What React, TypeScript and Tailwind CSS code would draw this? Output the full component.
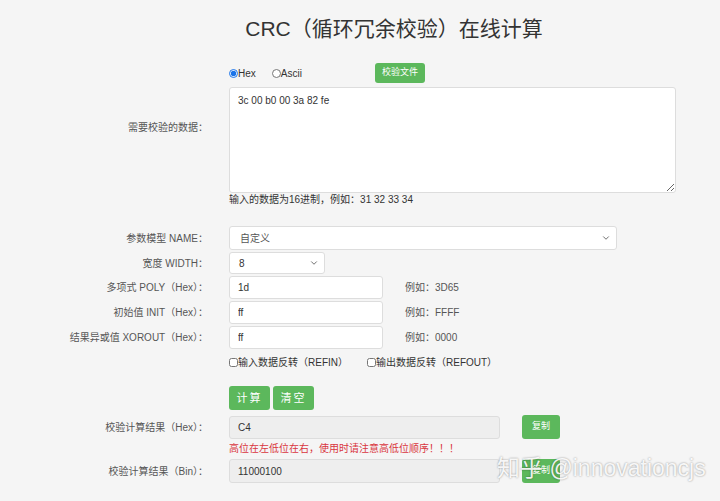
import { ChevronDown } from "lucide-react";

const font = "font-['Liberation_Sans','Noto_Sans_CJK_SC',sans-serif]";

function Row({
  label,
  children,
  className = "",
  labelClass = "",
}: {
  label?: string;
  children: React.ReactNode;
  className?: string;
  labelClass?: string;
}) {
  return (
    <div className={`flex items-center ${className}`}>
      <div className={`w-[208px] shrink-0 text-right text-[10px] text-[#555] ${labelClass}`}>
        {label}
      </div>
      <div className="ml-[21px] flex items-center">{children}</div>
    </div>
  );
}

function GreenButton({ children, className = "" }: { children: React.ReactNode; className?: string }) {
  return (
    <button className={`rounded-[3px] bg-[#5cb85c] text-white ${className}`}>{children}</button>
  );
}

export default function App() {
  return (
    <div className={`relative h-[501px] w-[720px] overflow-hidden bg-[#f5f5f5] ${font}`}>
      <h1 className="pl-[68px] pt-[14px] text-center text-[21px] leading-[30px] text-[#333]">
        CRC（循环冗余校验）在线计算
      </h1>

      {/* data format + file button */}
      <Row className="mt-[17px] h-[24px]">
        <label className="flex items-center text-[10px] text-[#333]">
          <input type="radio" name="fmt" defaultChecked className="m-0 h-[9px] w-[9px] accent-[#1a73e8]" />
          <span>Hex</span>
        </label>
        <label className="ml-[16px] flex items-center text-[10px] text-[#333]">
          <input type="radio" name="fmt" className="m-0 h-[9px] w-[9px]" />
          <span>Ascii</span>
        </label>
        <GreenButton className="ml-[73px] h-[20px] w-[50px] text-[9px]">校验文件</GreenButton>
      </Row>

      <div className="mt-[2px] flex">
        <div className="w-[208px] shrink-0 pt-[33px] text-right text-[10px] text-[#555]">需要校验的数据：</div>
        <textarea
          defaultValue="3c 00 b0 00 3a 82 fe"
          className="ml-[21px] h-[106px] w-[447px] rounded-[3px] border border-[#ddd] bg-white px-[8px] py-[5px] text-[10px] text-[#333] outline-none"
        />
      </div>
      <Row className="h-[14px]">
        <span className="text-[10px] leading-[14px] text-[#333]">输入的数据为16进制，例如：31 32 33 34</span>
      </Row>

      <Row label="参数模型 NAME：" className="mt-[19px]">
        <div className="relative flex h-[24px] w-[388px] items-center rounded-[3px] border border-[#ddd] bg-white pl-[10px] text-[10px] text-[#555]">
          自定义
          <ChevronDown className="absolute right-[5px] h-[10px] w-[10px] text-[#555]" strokeWidth={2} />
        </div>
      </Row>
      <Row label="宽度 WIDTH：" className="mt-[2px]">
        <div className="relative flex h-[22px] w-[96px] items-center rounded-[3px] border border-[#ddd] bg-white pl-[9px] text-[10px] text-[#333]">
          8
          <ChevronDown className="absolute right-[5px] h-[10px] w-[10px] text-[#555]" strokeWidth={2} />
        </div>
      </Row>

      {[
        ["多项式 POLY（Hex）：", "1d", "例如：3D65"],
        ["初始值 INIT（Hex）：", "ff", "例如：FFFF"],
        ["结果异或值 XOROUT（Hex）：", "ff", "例如：0000"],
      ].map(([label, value, hint]) => (
        <Row key={label} label={label} className="mt-[2px]">
          <input
            defaultValue={value}
            className="h-[23px] w-[154px] rounded-[3px] border border-[#ddd] bg-white px-[8px] text-[10px] text-[#333] outline-none"
          />
          <span className="ml-[22px] text-[10px] text-[#555]">{hint}</span>
        </Row>
      ))}

      <Row className="mt-[3px] h-[20px]">
        <label className="flex items-center text-[10px] text-[#333]">
          <input type="checkbox" className="m-0 h-[9px] w-[9px]" />
          <span>输入数据反转（REFIN）</span>
        </label>
        <label className="ml-[19px] flex items-center text-[10px] text-[#333]">
          <input type="checkbox" className="m-0 h-[9px] w-[9px]" />
          <span>输出数据反转（REFOUT）</span>
        </label>
      </Row>

      <Row className="mt-[14px]">
        <GreenButton className="h-[24px] w-[41px] text-[11px] tracking-[2px]">计算</GreenButton>
        <GreenButton className="ml-[3px] h-[24px] w-[41px] text-[11px] tracking-[2px]">清空</GreenButton>
      </Row>

      <Row label="校验计算结果（Hex）：" className="mt-[5px]">
        <input
          readOnly
          value="C4"
          className="h-[23px] w-[271px] rounded-[3px] border border-[#ddd] bg-[#eee] px-[8px] text-[10px] text-[#333] outline-none"
        />
        <GreenButton className="ml-[22px] h-[24px] w-[38px] text-[9px]">复制</GreenButton>
      </Row>
      <Row className="mt-[1px] h-[16px]">
        <span className="text-[10px] text-[#d9363e]">高位在左低位在右，使用时请注意高低位顺序！！！</span>
      </Row>
      <Row label="校验计算结果（Bin）：" className="mt-[3px]">
        <input
          readOnly
          value="11000100"
          className="h-[24px] w-[271px] rounded-[3px] border border-[#ddd] bg-[#eee] px-[8px] text-[10px] text-[#333] outline-none"
        />
        <GreenButton className="ml-[22px] h-[24px] w-[38px] text-[9px]">复制</GreenButton>
      </Row>

      <div className="absolute left-[497px] top-[452px] text-[23px] leading-[32px] text-white/90 [text-shadow:0_0_2px_rgba(0,0,0,0.45)]">
        知乎 @innovationcjs
      </div>
    </div>
  );
}
